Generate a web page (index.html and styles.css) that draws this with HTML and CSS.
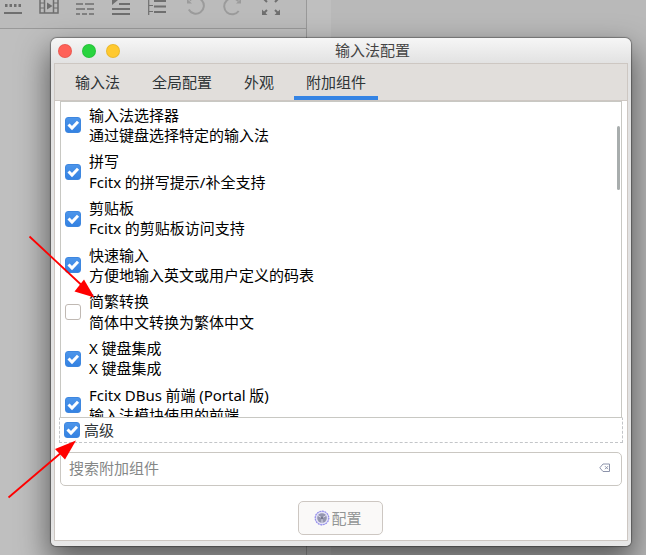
FILE: index.html
```html
<!DOCTYPE html>
<html lang="zh-CN">
<head>
<meta charset="utf-8">
<title>输入法配置</title>
<link rel="stylesheet" href="styles.css">
</head>
<body>
<div class="desktop">
  <div class="editor">
    <div class="toolbar">
      <svg width="306" height="28" viewBox="0 0 306 28" fill="none" stroke="#6f6f6f" stroke-width="2">
        <path d="M5 5.500h16" stroke-width="3" stroke-dasharray="2.500 2"/><path d="M4 13h18"/>
        <path d="M40 -4h18v17h-18zM44.500-4v17M53.500-4v17" stroke-width="1.500"/><path d="M40 3h4M40 8h4M54 3h4M54 8h4" stroke-width="1"/><path d="M47 2.500l5.500 3.500-5.500 3.500z" fill="#6f6f6f" stroke="none"/>
        <path d="M76 4h7m2 0h9M76 9h9m2 0h7M76 14h4m2 0h5m2 0h5" stroke-width="1.700"/>
        <path d="M112 0h6l-6 5z" fill="#6f6f6f" stroke="none"/><path d="M119 4h11M112 9h18M112 14h18" stroke-width="1.800"/>
        <path d="M148.700-2v17M149 5.500h4M149 11.500h4" stroke-width="1.200"/><path d="M154 1h12M154 6.500h12M154 12h12" stroke-width="1.800"/>
        <g stroke="#9b9b9b"><path d="M188.800 9.500a8 8 0 1 0 1-9M238.700 11a8 8 0 1 1-.5-10"/><path d="M187-1v4.500h5zM241-1v4.500h-5z" fill="#9b9b9b" stroke="none"/></g>
        <path d="M263 14l4-4M279 14l-4-4M263-2l4 4M279-2l-4 4"/><path d="M262 15v-5.500l5.500 5.500zM280 15v-5.500l-5.500 5.500z" fill="#6f6f6f" stroke="none"/>
      </svg>
    </div>
  </div>
  <div class="gutter"></div>
  <div class="preview"></div>
</div>

<main class="window">
  <header class="titlebar">
    <div class="lights"><i class="light red"></i><i class="light green"></i><i class="light yellow"></i></div>
    <h1>输入法配置</h1>
  </header>
  <section class="frame">
    <nav class="tabs">
      <span class="tab">输入法</span><span class="tab">全局配置</span><span class="tab">外观</span><span class="tab active">附加组件</span>
    </nav>
    <div class="page">
      <div class="list">
        <div class="row"><b class="check"><svg viewBox="0 0 16 16"><path d="M3.500 7.500l3.500 3.500 6-6.200"/></svg></b><p>输入法选择器<br>通过键盘选择特定的输入法</p></div>
        <div class="row"><b class="check"><svg viewBox="0 0 16 16"><path d="M3.500 7.500l3.500 3.500 6-6.200"/></svg></b><p>拼写<br>Fcitx 的拼写提示/补全支持</p></div>
        <div class="row"><b class="check"><svg viewBox="0 0 16 16"><path d="M3.500 7.500l3.500 3.500 6-6.200"/></svg></b><p>剪贴板<br>Fcitx 的剪贴板访问支持</p></div>
        <div class="row"><b class="check"><svg viewBox="0 0 16 16"><path d="M3.500 7.500l3.500 3.500 6-6.200"/></svg></b><p>快速输入<br>方便地输入英文或用户定义的码表</p></div>
        <div class="row"><b class="check off"></b><p>简繁转换<br>简体中文转换为繁体中文</p></div>
        <div class="row"><b class="check"><svg viewBox="0 0 16 16"><path d="M3.500 7.500l3.500 3.500 6-6.200"/></svg></b><p>X 键盘集成<br>X 键盘集成</p></div>
        <div class="row"><b class="check"><svg viewBox="0 0 16 16"><path d="M3.500 7.500l3.500 3.500 6-6.200"/></svg></b><p>Fcitx DBus 前端 (Portal 版)<br>输入法模块使用的前端</p></div>
        <i class="scrollbar"></i>
      </div>
      <div class="advanced"><b class="check"><svg viewBox="0 0 16 16"><path d="M3.500 7.500l3.500 3.500 6-6.200"/></svg></b><span>高级</span></div>
      <div class="search"><span>搜索附加组件</span>
        <svg width="12" height="10" viewBox="0 0 12 10" fill="none" stroke="#8c93aa"><path d="M4 1h6.500v7.500H4L.8 4.800z"/><path d="M6 3.200l3 3M9 3.200l-3 3"/></svg>
      </div>
      <div class="button">
        <svg width="16" height="16" viewBox="0 0 16 16" fill="none"><circle cx="8" cy="8" r="6.800" fill="#e4e3f6" stroke="#b9b5f3"/><circle cx="8" cy="8" r="6.800" stroke="#9690ea" stroke-width="1.200" stroke-dasharray="1.500 1.170"/><circle cx="8" cy="8" r="4.800" fill="#9496ae"/><path d="M8 8V12.700M8 8L4 5.500M8 8l4-2.500" stroke="#dddced"/><circle cx="8" cy="8" r="1.300" fill="#77798e"/></svg>
        <span>配置</span>
      </div>
    </div>
  </section>
</main>

<svg class="arrows" width="646" height="555" viewBox="0 0 646 555" fill="#f00" stroke="#f00">
  <path d="M29.500 236.500L82 285.500" stroke-width="1.800"/><path d="M94.500 297.500L74.500 291.500L84 279.500z" stroke="none"/>
  <path d="M8.500 497.500L62 452" stroke-width="1.800"/><path d="M76 440.500L55 449L65 459.500z" stroke="none"/>
</svg>
</body>
</html>
```
FILE: styles.css
```css
* { box-sizing: border-box; }
body {
  margin: 0;
  width: 646px;
  height: 555px;
  overflow: hidden;
  position: relative;
  font: 15px/20px "Noto Sans", "Noto Sans CJK SC", sans-serif;
  color: #000;
}
h1, p { margin: 0; }
svg { display: block; }
.desktop { display: flex; height: 555px; background: #bfbfbf; }
.editor { width: 307px; border-right: 1px solid #999; }
.toolbar { height: 29px; background: #bbb; border-bottom: 1px solid #999; }
.gutter { width: 24px; background: #bfbfbf; }
.preview { flex: 1; background: #b9b9b9; }

.window {
  position: absolute;
  left: 51px;
  top: 38px;
  width: 580px;
  height: 508px;
  padding: 0 3px 5px;
  border-radius: 6px 6px 5px 5px;
  background: linear-gradient(#f6f6f6, #e2e2e2 25px, #e2e2e2 480px, #e8e8e8);
  box-shadow: 0 0 1px 1px rgba(0, 0, 0, .32), 0 14px 30px 3px rgba(0, 0, 0, .5);
}
.titlebar { height: 25px; display: flex; align-items: center; }
.titlebar h1 { flex: 1; padding: 0 0 2px 62px; margin: 0 -1px 0 -70px; text-align: center; font-size: 15px; font-weight: 400; color: #444; }
.lights { display: flex; gap: 10px; padding-left: 4px; width: 70px; }
.light { width: 14px; height: 14px; border-radius: 50%; border: 1px solid rgba(0, 0, 0, .08); }
.red { background: #ff6158; }
.green { background: #29d43f; }
.yellow { background: #ffc92f; }

.frame { height: 478px; border: 1px solid #cdc7c2; background: #fff; }
.tabs { height: 37px; display: flex; padding-left: 8px; background: #e1dedb; border-bottom: 1px solid #cdc7c2; color: #2e3436; }
.tab { padding: 8px 12px 0; margin-right: 8px; }
.tab.active { border-bottom: 4px solid #3584e4; }

.page { padding: 0 5px; }
.list { position: relative; height: 317px; overflow: hidden; border: 1px solid #c8c8c3; padding: 0 0 0 4px; }
.row { display: flex; align-items: center; gap: 8px; height: 46.700px; }
.row p { white-space: nowrap; line-height: 20.300px; padding-bottom: 1px; word-spacing: -.3px; }
.check { width: 16px; height: 16px; flex: none; border-radius: 3px; background: linear-gradient(#4c95ea, #3482e2); border: 1px solid #3e87df; }
.check svg { width: 16px; height: 16px; margin: -1px; fill: none; stroke: #fff; stroke-width: 3; }
.check.off { background: #fff; border-color: #c0b9b3; }
.scrollbar { position: absolute; right: 1px; top: 24px; width: 3px; height: 64px; border-radius: 2px; background: #a8adad; }
.advanced { margin: -1px -1px 0; height: 26px; border: 1px dashed #c3c5c8; border-top-color: transparent; padding-left: 4px; display: flex; align-items: center; gap: 4px; color: #2e3436; }
.search { margin-top: 9px; height: 34px; border: 1px solid #cac7c2; border-radius: 5px; display: flex; align-items: center; justify-content: space-between; padding: 0 10px 2px 8px; color: #858787; }
.button { margin: 15px auto 0; position: relative; left: -1px; width: 85px; height: 34px; border: 1px solid #cdc7c2; border-radius: 5px; background: #faf9f8; display: flex; align-items: center; gap: 2px; padding-left: 15px; color: #929595; }
.arrows { position: absolute; left: 0; top: 0; }
```
